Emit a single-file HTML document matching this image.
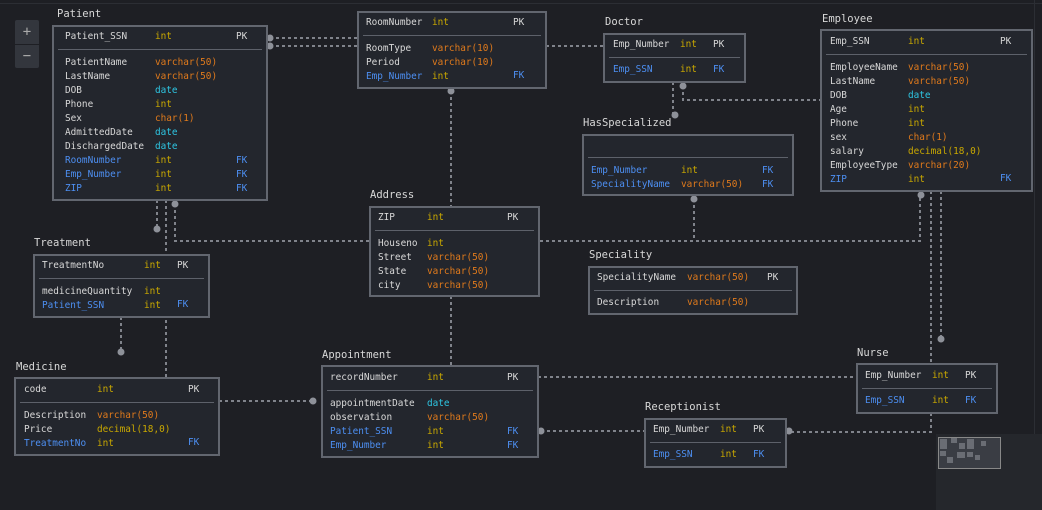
<!DOCTYPE html>
<html><head><meta charset="utf-8"><style>
*{margin:0;padding:0;box-sizing:border-box}
body{width:1042px;height:510px;background:#1e1f24;position:relative;overflow:hidden;font-family:"DejaVu Sans Mono","Liberation Mono",monospace;font-size:9.4px;color:#d6d6d6}
.t{position:absolute;background:#23262d;border:2px solid #62666f}
.ti{position:absolute;font-size:10.5px;color:#d8d8d8;white-space:nowrap;margin-top:1px}
.s{position:absolute;white-space:nowrap;line-height:12px;margin-top:1px}
.sep{position:absolute;height:1px;background:#5d616a}
.n{color:#d8d8d8}.i{color:#c9a800}.v{color:#e07a1c}.d{color:#2ec6e3}.f{color:#4d8ff2}.k{color:#d8d8d8}
svg{position:absolute;left:0;top:0}
.m{position:absolute;background:#6a6d74}
</style></head><body>
<div style="position:absolute;left:0;top:3px;width:1042px;height:1px;background:#2c2e34"></div>
<div style="position:absolute;left:1034px;top:0;width:1px;height:510px;background:#2c2e34"></div>
<div style="position:absolute;left:936px;top:434px;width:106px;height:76px;background:#25272c"></div>
<div style="position:absolute;left:938px;top:437px;width:63px;height:32px;background:#3a3d44;border:1px solid #888"></div>
<div class="m" style="left:940px;top:439px;width:7px;height:10px"></div><div class="m" style="left:951px;top:438px;width:6px;height:5px"></div>
<div class="m" style="left:959px;top:443px;width:6px;height:6px"></div><div class="m" style="left:967px;top:439px;width:7px;height:10px"></div>
<div class="m" style="left:940px;top:451px;width:6px;height:5px"></div><div class="m" style="left:947px;top:457px;width:6px;height:6px"></div>
<div class="m" style="left:957px;top:452px;width:8px;height:6px"></div><div class="m" style="left:967px;top:452px;width:6px;height:5px"></div>
<div class="m" style="left:975px;top:455px;width:5px;height:5px"></div><div class="m" style="left:981px;top:441px;width:5px;height:5px"></div>
<div style="position:absolute;left:15px;top:20px;width:24px;height:48px;background:#33363d;border-radius:2px;color:#aaa;font-size:14px;text-align:center;line-height:24px">+<br>−</div>
<div style="position:absolute;left:15px;top:44px;width:24px;height:1px;background:#1e1f24"></div>
<svg width="1042" height="510" fill="#8e9199" stroke="#80838b" stroke-width="2" stroke-dasharray="3,3">
<g fill="none">
<path d="M270 38H357M270 46H357M546 46H603"/>
<path d="M451 91V206M673 82V115M683 86V100H820M694 199V241"/>
<path d="M157 200V229M166 200V377M175 204V241H920V195"/>
<path d="M931 191V432H789M941 191V339"/>
<path d="M121 317V352M219 401H313M451 296V365M538 377H856M541 431H644"/>
</g>
<g stroke="none">
<circle cx="270" cy="38" r="3.5"/><circle cx="270" cy="46" r="3.5"/><circle cx="451" cy="91" r="3.5"/>
<circle cx="675" cy="115" r="3.5"/><circle cx="683" cy="86" r="3.5"/><circle cx="694" cy="199" r="3.5"/>
<circle cx="157" cy="229" r="3.5"/><circle cx="175" cy="204" r="3.5"/><circle cx="921" cy="195" r="3.5"/>
<circle cx="941" cy="339" r="3.5"/><circle cx="121" cy="352" r="3.5"/><circle cx="313" cy="401" r="3.5"/>
<circle cx="541" cy="431" r="3.5"/><circle cx="789" cy="431" r="3.5"/>
</g></svg>

<!-- Patient -->
<div class="ti" style="left:57px;top:7px">Patient</div>
<div class="t" style="left:52px;top:25px;width:216px;height:176px"></div>
<div class="sep" style="left:58px;top:49px;width:204px"></div>
<div class="s n" style="left:65px;top:30px">Patient_SSN</div><div class="s i" style="left:155px;top:30px">int</div><div class="s k" style="left:236px;top:30px">PK</div>
<div class="s n" style="left:65px;top:55px;line-height:14px">PatientName<br>LastName<br>DOB<br>Phone<br>Sex<br>AdmittedDate<br>DischargedDate<br><span class="f">RoomNumber<br>Emp_Number<br>ZIP</span></div>
<div class="s" style="left:155px;top:55px;line-height:14px"><span class="v">varchar(50)<br>varchar(50)</span><br><span class="d">date</span><br><span class="i">int</span><br><span class="v">char(1)</span><br><span class="d">date<br>date</span><br><span class="i">int<br>int<br>int</span></div>
<div class="s f" style="left:236px;top:153px;line-height:14px">FK<br>FK<br>FK</div>

<!-- Room -->
<div class="t" style="left:357px;top:11px;width:190px;height:78px"></div>
<div class="sep" style="left:363px;top:35px;width:178px"></div>
<div class="s n" style="left:366px;top:16px">RoomNumber</div><div class="s i" style="left:432px;top:16px">int</div><div class="s k" style="left:513px;top:16px">PK</div>
<div class="s n" style="left:366px;top:41px;line-height:14px">RoomType<br>Period<br><span class="f">Emp_Number</span></div>
<div class="s v" style="left:432px;top:41px;line-height:14px">varchar(10)<br>varchar(10)<br><span class="i">int</span></div>
<div class="s f" style="left:513px;top:69px">FK</div>

<!-- Doctor -->
<div class="ti" style="left:605px;top:15px">Doctor</div>
<div class="t" style="left:603px;top:33px;width:143px;height:50px"></div>
<div class="sep" style="left:609px;top:57px;width:131px"></div>
<div class="s n" style="left:613px;top:38px">Emp_Number</div><div class="s i" style="left:680px;top:38px">int</div><div class="s k" style="left:713px;top:38px">PK</div>
<div class="s f" style="left:613px;top:63px">Emp_SSN</div><div class="s i" style="left:680px;top:63px">int</div><div class="s f" style="left:713px;top:63px">FK</div>

<!-- Employee -->
<div class="ti" style="left:822px;top:12px">Employee</div>
<div class="t" style="left:820px;top:29px;width:213px;height:163px"></div>
<div class="sep" style="left:826px;top:54px;width:201px"></div>
<div class="s n" style="left:830px;top:35px">Emp_SSN</div><div class="s i" style="left:908px;top:35px">int</div><div class="s k" style="left:1000px;top:35px">PK</div>
<div class="s n" style="left:830px;top:60px;line-height:14px">EmployeeName<br>LastName<br>DOB<br>Age<br>Phone<br>sex<br>salary<br>EmployeeType<br><span class="f">ZIP</span></div>
<div class="s" style="left:908px;top:60px;line-height:14px"><span class="v">varchar(50)<br>varchar(50)</span><br><span class="d">date</span><br><span class="i">int<br>int</span><br><span class="v">char(1)</span><br><span class="i">decimal(18,0)</span><br><span class="v">varchar(20)</span><br><span class="i">int</span></div>
<div class="s f" style="left:1000px;top:172px">FK</div>

<!-- HasSpecialized -->
<div class="ti" style="left:583px;top:116px">HasSpecialized</div>
<div class="t" style="left:582px;top:134px;width:212px;height:62px"></div>
<div class="sep" style="left:588px;top:157px;width:200px"></div>
<div class="s f" style="left:591px;top:163px;line-height:14px">Emp_Number<br>SpecialityName</div>
<div class="s" style="left:681px;top:163px;line-height:14px"><span class="i">int</span><br><span class="v">varchar(50)</span></div>
<div class="s f" style="left:762px;top:163px;line-height:14px">FK<br>FK</div>

<!-- Address -->
<div class="ti" style="left:370px;top:188px">Address</div>
<div class="t" style="left:369px;top:206px;width:171px;height:91px"></div>
<div class="sep" style="left:375px;top:230px;width:159px"></div>
<div class="s n" style="left:378px;top:211px">ZIP</div><div class="s i" style="left:427px;top:211px">int</div><div class="s k" style="left:507px;top:211px">PK</div>
<div class="s n" style="left:378px;top:236px;line-height:14px">Houseno<br>Street<br>State<br>city</div>
<div class="s v" style="left:427px;top:236px;line-height:14px"><span class="i">int</span><br>varchar(50)<br>varchar(50)<br>varchar(50)</div>

<!-- Speciality -->
<div class="ti" style="left:589px;top:248px">Speciality</div>
<div class="t" style="left:588px;top:266px;width:210px;height:49px"></div>
<div class="sep" style="left:594px;top:290px;width:198px"></div>
<div class="s n" style="left:597px;top:271px">SpecialityName</div><div class="s v" style="left:687px;top:271px">varchar(50)</div><div class="s k" style="left:767px;top:271px">PK</div>
<div class="s n" style="left:597px;top:296px">Description</div><div class="s v" style="left:687px;top:296px">varchar(50)</div>

<!-- Treatment -->
<div class="ti" style="left:34px;top:236px">Treatment</div>
<div class="t" style="left:33px;top:254px;width:177px;height:64px"></div>
<div class="sep" style="left:39px;top:278px;width:165px"></div>
<div class="s n" style="left:42px;top:259px">TreatmentNo</div><div class="s i" style="left:144px;top:259px">int</div><div class="s k" style="left:177px;top:259px">PK</div>
<div class="s n" style="left:42px;top:284px;line-height:14px">medicineQuantity<br><span class="f">Patient_SSN</span></div>
<div class="s i" style="left:144px;top:284px;line-height:14px">int<br>int</div>
<div class="s f" style="left:177px;top:298px">FK</div>

<!-- Medicine -->
<div class="ti" style="left:16px;top:360px">Medicine</div>
<div class="t" style="left:14px;top:377px;width:206px;height:79px"></div>
<div class="sep" style="left:20px;top:402px;width:194px"></div>
<div class="s n" style="left:24px;top:383px">code</div><div class="s i" style="left:97px;top:383px">int</div><div class="s k" style="left:188px;top:383px">PK</div>
<div class="s n" style="left:24px;top:408px;line-height:14px">Description<br>Price<br><span class="f">TreatmentNo</span></div>
<div class="s" style="left:97px;top:408px;line-height:14px"><span class="v">varchar(50)</span><br><span class="i">decimal(18,0)<br>int</span></div>
<div class="s f" style="left:188px;top:436px">FK</div>

<!-- Appointment -->
<div class="ti" style="left:322px;top:348px">Appointment</div>
<div class="t" style="left:321px;top:365px;width:218px;height:93px"></div>
<div class="sep" style="left:327px;top:390px;width:206px"></div>
<div class="s n" style="left:330px;top:371px">recordNumber</div><div class="s i" style="left:427px;top:371px">int</div><div class="s k" style="left:507px;top:371px">PK</div>
<div class="s n" style="left:330px;top:396px;line-height:14px">appointmentDate<br>observation<br><span class="f">Patient_SSN<br>Emp_Number</span></div>
<div class="s" style="left:427px;top:396px;line-height:14px"><span class="d">date</span><br><span class="v">varchar(50)</span><br><span class="i">int<br>int</span></div>
<div class="s f" style="left:507px;top:424px;line-height:14px">FK<br>FK</div>

<!-- Receptionist -->
<div class="ti" style="left:645px;top:400px">Receptionist</div>
<div class="t" style="left:644px;top:418px;width:143px;height:50px"></div>
<div class="sep" style="left:650px;top:442px;width:131px"></div>
<div class="s n" style="left:653px;top:423px">Emp_Number</div><div class="s i" style="left:720px;top:423px">int</div><div class="s k" style="left:753px;top:423px">PK</div>
<div class="s f" style="left:653px;top:448px">Emp_SSN</div><div class="s i" style="left:720px;top:448px">int</div><div class="s f" style="left:753px;top:448px">FK</div>

<!-- Nurse -->
<div class="ti" style="left:857px;top:346px">Nurse</div>
<div class="t" style="left:856px;top:363px;width:142px;height:51px"></div>
<div class="sep" style="left:862px;top:388px;width:130px"></div>
<div class="s n" style="left:865px;top:369px">Emp_Number</div><div class="s i" style="left:932px;top:369px">int</div><div class="s k" style="left:965px;top:369px">PK</div>
<div class="s f" style="left:865px;top:394px">Emp_SSN</div><div class="s i" style="left:932px;top:394px">int</div><div class="s f" style="left:965px;top:394px">FK</div>
</body></html>
